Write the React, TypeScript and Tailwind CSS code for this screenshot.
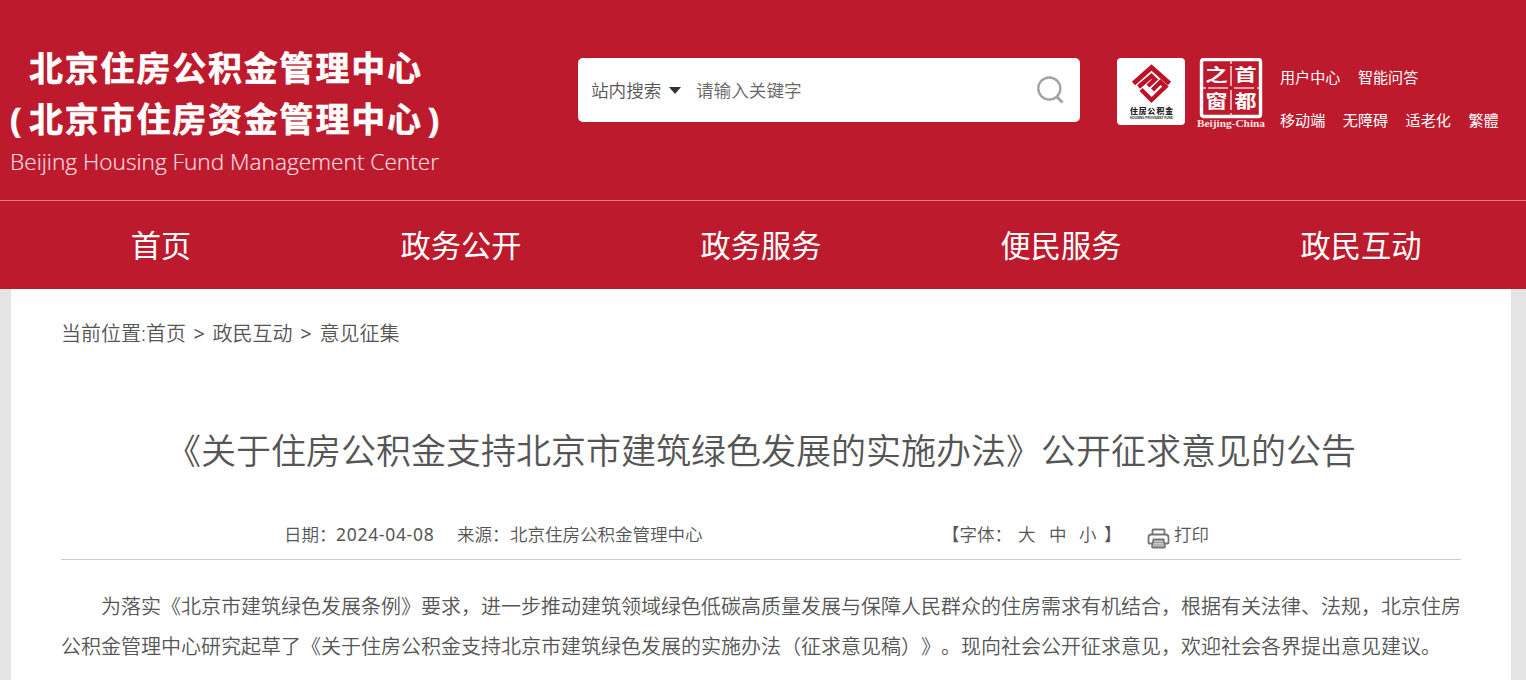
import React from 'react';

const navItems = ['首页', '政务公开', '政务服务', '便民服务', '政民互动'];
const accountLinks = ['用户中心', '智能问答'];
const toolLinks = ['移动端', '无障碍', '适老化', '繁體'];

function FundLogo() {
  return (
    <svg width="68" height="67" viewBox="0 0 68 67" className="shrink-0">
      <rect width="68" height="67" rx="4" fill="#fff" />
      <g fill="none" stroke="#bc1229" strokeWidth="4.4">
        <path d="M16.5 25.5 L34.5 9.5 L52.5 25.5" strokeWidth="5" />
        <path d="M21.5 29 L34.5 18 L38 21.5 L31 28" />
        <path d="M24 31.5 L34.5 42 L48.5 28.5 L43.5 24 L35.5 32" />
      </g>
      <g fill="#222" textAnchor="middle">
        <text x="34.5" y="56" textLength="43" fontSize="7.8" fontWeight="900" fontFamily="Noto Sans CJK SC, sans-serif">住房公积金</text>
        <text x="34.5" y="60.5" textLength="43" lengthAdjust="spacingAndGlyphs" fontSize="3" fontWeight="700" fontFamily="Liberation Sans, sans-serif">HOUSING PROVIDENT FUND</text>
      </g>
    </svg>
  );
}

function CapitalSeal() {
  return (
    <svg width="70" height="74" viewBox="0 0 70 74" className="shrink-0">
      <rect x="4.5" y="1.5" width="59" height="57" rx="2" fill="none" stroke="#fff" strokeWidth="3.4" />
      <path d="M34 3v3M34 8v20M34 32v20M34 55v3M6 30h3M11 30h20M37 30h20M60 30h3" stroke="#f3ccd0" strokeWidth="1.6" />
      <g fill="#fff" fontSize="20" fontWeight="700" fontFamily="Noto Sans CJK SC, sans-serif" textAnchor="middle">
        <text transform="translate(19.5 23) scale(1.12 .86)">之</text>
        <text transform="translate(48.5 23) scale(1.1 .86)">首</text>
        <text transform="translate(19.5 50) scale(1.1 .92)">窗</text>
        <text transform="translate(48.5 50) scale(1.1 .92)">都</text>
      </g>
      <text x="34" y="68.5" textAnchor="middle" textLength="68" lengthAdjust="spacingAndGlyphs" fontSize="9.8" fontWeight="700" fontFamily="Liberation Serif, serif" fill="#fbe3e5">Beijing-China</text>
    </svg>
  );
}

function Header() {
  return (
    <header className="bg-[#bd1b2d] text-white">
      <div className="flex h-[200px] items-start">
        <div className="w-[578px] pt-[42px]">
          <div className="pl-[29px] text-[34px] leading-[52px] font-bold tracking-[1.8px] whitespace-nowrap [-webkit-text-stroke:0.5px_white]">北京住房公积金管理中心</div>
          <div className="flex text-[34px] leading-[51px] font-bold whitespace-nowrap [-webkit-text-stroke:0.5px_white]">
            <span className="w-[29px] pl-[10px]">(</span>
            <span className="tracking-[1.8px]">北京市住房资金管理中心</span>
            <span className="pl-[5px]">)</span>
          </div>
          <svg width="450" height="36" className="block">
            <text x="10" y="25" textLength="429" lengthAdjust="spacingAndGlyphs" fontSize="22.5" fontWeight="300" fontFamily="Open Sans, sans-serif" fill="#f8dde0" stroke="#f8dde0" strokeWidth="0.2">Beijing Housing Fund Management Center</text>
          </svg>
        </div>

        <div className="mt-[58px] flex h-16 w-[502px] items-center rounded-[5px] bg-white pr-4 pl-[13px] text-[17.6px] font-[350] text-[#555]">
          <span className="w-[71px]">站内搜索</span>
          <span className="mr-[14px] ml-[7px] border-x-[6px] border-t-[7px] border-x-transparent border-t-[#333]" />
          <span className="flex-1 pl-px text-[#666]">请输入关键字</span>
          <svg width="28" height="28" viewBox="0 0 28 28" fill="none" stroke="#a3a3a3" strokeWidth="2.4">
            <circle cx="13.3" cy="12.5" r="11" />
            <path d="M20.5 20.5l6 6" strokeWidth="3" />
          </svg>
        </div>

        <div className="mt-[58px] ml-[37px] flex items-start">
          <FundLogo />
          <div className="ml-[12px]"><CapitalSeal /></div>
        </div>

        <div className="mt-[66px] ml-[13px] text-[15.1px] leading-[22px]">
          <div className="mb-[21px] flex gap-[17.5px]">
            {accountLinks.map((label) => <a key={label}>{label}</a>)}
          </div>
          <div className="flex gap-[17.5px]">
            {toolLinks.map((label) => <a key={label}>{label}</a>)}
          </div>
        </div>
      </div>

      <nav className="flex h-[89px] border-t border-[#d98088] pt-[2px] pr-[15px] pl-[11px]">
        {navItems.map((label) => (
          <a key={label} className="flex flex-1 items-center justify-center text-[30.2px]">{label}</a>
        ))}
      </nav>
    </header>
  );
}

function PrintIcon() {
  return (
    <svg width="23" height="21" viewBox="0 0 23 21" fill="none" stroke="#747474" strokeWidth="1.8">
      <path d="M5.5 6V2.5q0-1 1-1h10q1 0 1 1V6" />
      <path d="M5 15.5H2.5q-1 0-1-1V9.5q0-3 3-3h14q3 0 3 3v5q0 1-1 1H18" />
      <path d="M6.5 11.5h10l1.5 7q0 1-1 1H6q-1 0-1-1z" fill="#ccc" />
      <path d="M7 14.5h9M7 17h9" strokeWidth="1.2" stroke="#999" />
    </svg>
  );
}

export default function App() {
  return (
    <div lang="zh-CN" className="h-[680px] overflow-hidden bg-[#e4e4e4] font-['Noto_Sans','Noto_Sans_CJK_SC',sans-serif] [text-spacing-trim:space-all]">
      <Header />
      <main className="mr-[15px] ml-[11px] h-[391px] bg-white px-[50px] font-[350] text-[#555]">
        <div className="flex pt-[30px] text-[20px] leading-[30px]">
          <span>当前位置:首页</span>
          <span className="w-[26.5px] text-center font-normal">&gt;</span>
          <span>政民互动</span>
          <span className="w-[27px] text-center font-normal">&gt;</span>
          <span>意见征集</span>
        </div>

        <h1 className="mt-[77px] text-center text-[35px] leading-[50px] font-[350]">
          《关于住房公积金支持北京市建筑绿色发展的实施办法》公开征求意见的公告
        </h1>

        <div className="mt-[33px] flex h-[51px] items-start border-b border-[#ccc] pl-[223px] text-[17.5px] leading-[50px] whitespace-nowrap">
          <span className="w-[52px]">日期：</span>
          <span className="w-[121px] font-normal tracking-[0.7px]">2024-04-08</span>
          <span className="w-[53px]">来源：</span>
          <span className="w-[432px]">北京住房公积金管理中心</span>
          <span className="w-[76px]">【字体：</span>
          <span className="w-[31px]">大</span>
          <span className="w-[30px]">中</span>
          <span className="w-[25px]">小</span>
          <span className="w-[43px]">】</span>
          <span className="mt-[19px] mr-1"><PrintIcon /></span>
          <span>打印</span>
        </div>

        <p className="mt-[27px] indent-[40px] text-[20px] leading-[40px]">
          为落实《北京市建筑绿色发展条例》要求，进一步推动建筑领域绿色低碳高质量发展与保障人民群众的住房需求有机结合，根据有关法律、法规，北京住房公积金管理中心研究起草了《关于住房公积金支持北京市建筑绿色发展的实施办法（征求意见稿）》。现向社会公开征求意见，欢迎社会各界提出意见建议。
        </p>
      </main>
    </div>
  );
}
